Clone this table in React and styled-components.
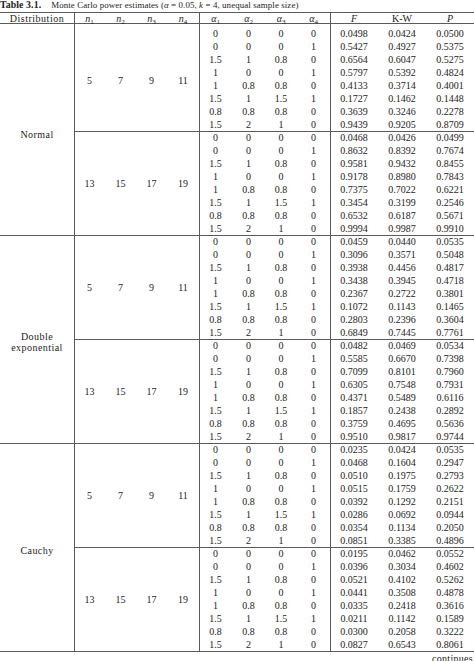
import React from "react";
import styled, { createGlobalStyle } from "styled-components";

const Global = createGlobalStyle`
  html, body { margin: 0; padding: 0; background: #fff; }
  body { overflow: hidden; }
`;

const LINE = "#5a5a5a";

const Page = styled.div`
  width: 474px;
  font-family: "Liberation Serif", "Times New Roman", serif;
  color: #1c1c1c;
  font-size: 10px;
`;

const Caption = styled.div`
  height: 12px;
  line-height: 9px;
  font-size: 8.9px;
  white-space: nowrap;
  overflow: hidden;
  letter-spacing: 0.1px;
`;

const CaptionLabel = styled.b`
  font-size: 9.8px;
  margin-right: 10px;
`;

const Table = styled.table`
  width: 474px;
  table-layout: fixed;
  border-collapse: separate;
  border-spacing: 0;
  border-top: 1px solid ${LINE};
  border-bottom: 1px solid ${LINE};
`;

const HeadCell = styled.th`
  font-weight: normal;
  padding: 0 0 3px 0;
  height: 11px;
  line-height: 11px;
  text-align: center;
  vertical-align: top;
  white-space: nowrap;
  letter-spacing: ${(p) => (p.$word ? "0.5px" : "0")};
  background: linear-gradient(${LINE}, ${LINE}) 0 10px / 100% 1px no-repeat;
  box-shadow: ${(p) => (p.$left ? `inset 1px 0 0 ${LINE}` : "none")};
`;

const Cell = styled.td`
  padding: 0;
  height: 13px;
  line-height: 13px;
  text-align: center;
  vertical-align: middle;
  white-space: nowrap;
  box-shadow: ${(p) => {
    const s = [];
    if (p.$left) s.push(`inset 1px 0 0 ${LINE}`);
    if (p.$top) s.push(`inset 0 1px 0 ${LINE}`);
    return s.length ? s.join(", ") : "none";
  }};
`;

const NCell = styled(Cell)`
  padding-top: ${(p) => (p.$lead ? "3px" : "0")};
`;

const DistCell = styled(Cell)`
  padding-top: 6px;
  line-height: 11px;
  letter-spacing: 0.45px;
  white-space: normal;
`;

const Var = styled.i`
  font-style: italic;
`;

const Sub = styled.sub`
  font-size: 7px;
  line-height: 0;
  vertical-align: -2px;
  font-style: normal;
`;

const Footer = styled.div`
  text-align: right;
  line-height: 12px;
  padding-top: 1px;
  padding-right: 1px;
  letter-spacing: 0.3px;
`;

const alphas = [
  ["0", "0", "0", "0"],
  ["0", "0", "0", "1"],
  ["1.5", "1", "0.8", "0"],
  ["1", "0", "0", "1"],
  ["1", "0.8", "0.8", "0"],
  ["1.5", "1", "1.5", "1"],
  ["0.8", "0.8", "0.8", "0"],
  ["1.5", "2", "1", "0"],
];

const data = [
  {
    name: ["Normal"],
    groups: [
      {
        n: ["5", "7", "9", "11"],
        v: [
          ["0.0498", "0.0424", "0.0500"],
          ["0.5427", "0.4927", "0.5375"],
          ["0.6564", "0.6047", "0.5275"],
          ["0.5797", "0.5392", "0.4824"],
          ["0.4133", "0.3714", "0.4001"],
          ["0.1727", "0.1462", "0.1448"],
          ["0.3639", "0.3246", "0.2278"],
          ["0.9439", "0.9205", "0.8709"],
        ],
      },
      {
        n: ["13", "15", "17", "19"],
        v: [
          ["0.0468", "0.0426", "0.0499"],
          ["0.8632", "0.8392", "0.7674"],
          ["0.9581", "0.9432", "0.8455"],
          ["0.9178", "0.8980", "0.7843"],
          ["0.7375", "0.7022", "0.6221"],
          ["0.3454", "0.3199", "0.2546"],
          ["0.6532", "0.6187", "0.5671"],
          ["0.9994", "0.9987", "0.9910"],
        ],
      },
    ],
  },
  {
    name: ["Double", "exponential"],
    groups: [
      {
        n: ["5", "7", "9", "11"],
        v: [
          ["0.0459", "0.0440", "0.0535"],
          ["0.3096", "0.3571", "0.5048"],
          ["0.3938", "0.4456", "0.4817"],
          ["0.3438", "0.3945", "0.4718"],
          ["0.2367", "0.2722", "0.3801"],
          ["0.1072", "0.1143", "0.1465"],
          ["0.2803", "0.2396", "0.3604"],
          ["0.6849", "0.7445", "0.7761"],
        ],
      },
      {
        n: ["13", "15", "17", "19"],
        v: [
          ["0.0482", "0.0469", "0.0534"],
          ["0.5585", "0.6670", "0.7398"],
          ["0.7099", "0.8101", "0.7960"],
          ["0.6305", "0.7548", "0.7931"],
          ["0.4371", "0.5489", "0.6116"],
          ["0.1857", "0.2438", "0.2892"],
          ["0.3759", "0.4695", "0.5636"],
          ["0.9510", "0.9817", "0.9744"],
        ],
      },
    ],
  },
  {
    name: ["Cauchy"],
    groups: [
      {
        n: ["5", "7", "9", "11"],
        v: [
          ["0.0235", "0.0424", "0.0535"],
          ["0.0468", "0.1604", "0.2947"],
          ["0.0510", "0.1975", "0.2793"],
          ["0.0515", "0.1759", "0.2622"],
          ["0.0392", "0.1292", "0.2151"],
          ["0.0286", "0.0692", "0.0944"],
          ["0.0354", "0.1134", "0.2050"],
          ["0.0851", "0.3385", "0.4896"],
        ],
      },
      {
        n: ["13", "15", "17", "19"],
        v: [
          ["0.0195", "0.0462", "0.0552"],
          ["0.0396", "0.3034", "0.4602"],
          ["0.0521", "0.4102", "0.5262"],
          ["0.0441", "0.3508", "0.4878"],
          ["0.0335", "0.2418", "0.3616"],
          ["0.0211", "0.1142", "0.1589"],
          ["0.0300", "0.2058", "0.3222"],
          ["0.0827", "0.6543", "0.8061"],
        ],
      },
    ],
  },
];

const widths = [74, 31, 31, 31, 32, 33, 33, 32, 33, 48, 48, 48];

export default function App() {
  const rows = [];
  data.forEach((dist, di) => {
    dist.groups.forEach((g, gi) => {
      g.v.forEach((vals, ri) => {
        const first = ri === 0;
        const lead = di === 0 && gi === 0;
        const top = first && !lead;
        rows.push(
          <tr key={`${di}-${gi}-${ri}`}>
            {first && gi === 0 && (
              <DistCell rowSpan={16} $top={top}>
                {dist.name.map((w, i) => (
                  <React.Fragment key={i}>
                    {i > 0 && <br />}
                    {w}
                  </React.Fragment>
                ))}
              </DistCell>
            )}
            {first &&
              g.n.map((n, i) => (
                <NCell key={`n${i}`} rowSpan={8} $top={top} $left={i === 0} $lead={lead}>
                  {n}
                </NCell>
              ))}
            {alphas[ri].map((a, i) => (
              <Cell key={`a${i}`} $top={top} $left={i === 0}>
                {a}
              </Cell>
            ))}
            {vals.map((v, i) => (
              <Cell key={`v${i}`} $top={top} $left={i === 0}>
                {v}
              </Cell>
            ))}
          </tr>
        );
      });
    });
  });

  return (
    <Page>
      <Global />
      <Caption>
        <CaptionLabel>Table 3.1.</CaptionLabel>
        Monte Carlo power estimates (<Var>α</Var> = 0.05, <Var>k</Var> = 4, unequal sample size)
      </Caption>
      <Table>
        <colgroup>
          {widths.map((w, i) => (
            <col key={i} style={{ width: w }} />
          ))}
        </colgroup>
        <thead>
          <tr>
            <HeadCell $word>Distribution</HeadCell>
            {[1, 2, 3, 4].map((i) => (
              <HeadCell key={`n${i}`} $left={i === 1}>
                <Var>n</Var>
                <Sub>{i}</Sub>
              </HeadCell>
            ))}
            {[1, 2, 3, 4].map((i) => (
              <HeadCell key={`a${i}`} $left={i === 1}>
                <Var>α</Var>
                <Sub>{i}</Sub>
              </HeadCell>
            ))}
            <HeadCell $left>
              <Var>F</Var>
            </HeadCell>
            <HeadCell>K-W</HeadCell>
            <HeadCell>
              <Var>P</Var>
            </HeadCell>
          </tr>
        </thead>
        <tbody>{rows}</tbody>
      </Table>
      <Footer>continues</Footer>
    </Page>
  );
}
